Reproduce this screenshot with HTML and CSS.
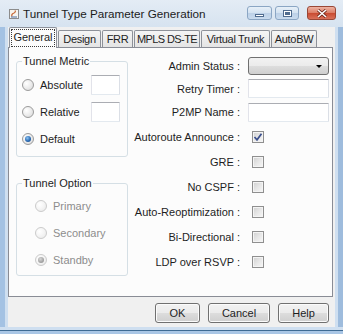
FILE: index.html
```html
<!DOCTYPE html>
<html lang="en">
<head>
    <meta charset="UTF-8">
    <title>Tunnel Type Parameter Generation</title>
    <link rel="stylesheet" href="styles.css">
</head>
<body>
    <div class="window">
        <div class="titlebar">
            <svg class="app-icon" width="10" height="10" viewBox="0 0 10 10">
                <rect x="0.5" y="0.5" width="9" height="9" fill="#f6f4ee" stroke="#8c8c8c"/>
                <path d="M3 7.5 Q2 5 5 4 Q7 3 6 1.5" fill="none" stroke="#c4602c" stroke-width="1.2"/>
                <path d="M2 8 H8" stroke="#4d6fa3" stroke-width="1"/>
            </svg>
            <span class="title">Tunnel Type Parameter Generation</span>
            <div class="caption">
                <span class="cap cap-min"><i></i></span>
                <span class="cap cap-max"><i></i></span>
                <span class="cap cap-close">
                    <svg width="12" height="9" viewBox="0 0 12 9">
                        <path d="M2 1 L10 8 M10 1 L2 8" stroke="#6b2418" stroke-width="3"/>
                        <path d="M2 1 L10 8 M10 1 L2 8" stroke="#fff" stroke-width="1.6"/>
                    </svg>
                </span>
            </div>
        </div>

        <div class="client">
            <div class="tabs">
                <div class="tab active"><span class="focus">General</span></div>
                <div class="tab tab-design">Design</div>
                <div class="tab tab-frr">FRR</div>
                <div class="tab tab-mpls">MPLS DS-TE</div>
                <div class="tab tab-trunk">Virtual Trunk</div>
                <div class="tab tab-autobw">AutoBW</div>
            </div>

            <div class="panel">
                <div class="left-col">
                    <fieldset class="group metric">
                        <legend>Tunnel Metric</legend>
                        <div class="opt"><span class="radio"></span><span class="opt-label">Absolute</span><span class="textbox small"></span></div>
                        <div class="opt"><span class="radio"></span><span class="opt-label">Relative</span><span class="textbox small"></span></div>
                        <div class="opt"><span class="radio on"></span><span class="opt-label">Default</span></div>
                    </fieldset>

                    <fieldset class="group option">
                        <legend>Tunnel Option</legend>
                        <div class="opt sub"><span class="radio off"></span><span class="opt-label dim">Primary</span></div>
                        <div class="opt sub"><span class="radio off"></span><span class="opt-label dim">Secondary</span></div>
                        <div class="opt sub"><span class="radio off on-dim"></span><span class="opt-label dim">Standby</span></div>
                    </fieldset>
                </div>

                <div class="form">
                    <div class="row r-admin"><span class="lbl">Admin Status :</span><div class="combo"><span class="arrow"></span></div></div>
                    <div class="row r-retry"><span class="lbl">Retry Timer :</span><div class="textbox wide"></div></div>
                    <div class="row r-p2mp"><span class="lbl">P2MP Name :</span><div class="textbox wide"></div></div>
                    <div class="row r-check"><span class="lbl">Autoroute Announce :</span>
                        <span class="check">
                            <svg width="10" height="10" viewBox="0 0 10 10"><path d="M1.5 5 L4 7.8 L8.5 1.8" fill="none" stroke="#3b4f8c" stroke-width="1.7"/></svg>
                        </span>
                    </div>
                    <div class="row r-check"><span class="lbl">GRE :</span><span class="check"></span></div>
                    <div class="row r-check"><span class="lbl">No CSPF :</span><span class="check"></span></div>
                    <div class="row r-check"><span class="lbl">Auto-Reoptimization :</span><span class="check"></span></div>
                    <div class="row r-check"><span class="lbl">Bi-Directional :</span><span class="check"></span></div>
                    <div class="row r-check"><span class="lbl">LDP over RSVP :</span><span class="check"></span></div>
                </div>
            </div>

            <div class="buttons">
                <button class="btn btn-ok">OK</button>
                <button class="btn btn-cancel">Cancel</button>
                <button class="btn btn-help">Help</button>
            </div>
        </div>
        <div class="frame-bottom"></div>
    </div>
</body>
</html>
```

FILE: styles.css
```css
* {
    margin: 0;
    padding: 0;
    box-sizing: border-box;
}

body {
    font-family: "Liberation Sans", Arial, sans-serif;
    font-size: 11px;
    color: #1e1e1e;
    background: #bdd3ea;
}

.window {
    width: 343px;
    height: 334px;
    display: flex;
    flex-direction: column;
    background: linear-gradient(to right, #a4c2e3 0, #a4c2e3 5px, #cfdff0 5px, #cfdff0 338px, #9ebcdd 338px);
    overflow: hidden;
}

/* title bar */
.titlebar {
    height: 27px;
    display: flex;
    align-items: center;
    padding: 0 7px 0 9px;
    background: linear-gradient(to bottom, #e4ecf5, #d6e3f0);
    flex-shrink: 0;
}

.app-icon {
    display: block;
    margin-top: 1px;
}

.title {
    margin-left: 4px;
    font-size: 11.7px;
    color: #1b1b1b;
}

.caption {
    margin-left: auto;
    align-self: flex-start;
    margin-top: 6px;
    display: flex;
}

.cap {
    height: 14px;
    border: 1px solid #8ba6c4;
    border-radius: 3px;
    display: flex;
    align-items: center;
    justify-content: center;
    background: linear-gradient(to bottom, #e8f0f8 0, #d3e2f1 50%, #bcd0e7 51%, #c9dbee 100%);
}

.cap-min {
    width: 25px;
}

.cap-min i {
    display: block;
    width: 9px;
    height: 3px;
    margin-top: 4px;
    background: #fff;
    border: 1px solid #4f6b8e;
}

.cap-max {
    width: 24px;
    margin-left: 3px;
}

.cap-max i {
    display: block;
    width: 9px;
    height: 7px;
    background: #fff;
    border: 1px solid #4f6b8e;
    box-shadow: inset 0 0 0 1px #fff, inset 0 0 0 3px #4f6b8e;
}

.cap-close {
    width: 29px;
    margin-left: 8px;
    border-color: #9a4736;
    background: linear-gradient(to bottom, #eeb3a3 0, #db7c64 50%, #c94a30 51%, #d9715a 100%);
}

.cap-close svg {
    display: block;
}

/* client area */
.client {
    flex: 1;
    margin: 0 8px 0 8px;
    background: #f0f0f0;
    display: flex;
    flex-direction: column;
}

.tabs {
    height: 20px;
    display: flex;
    align-items: flex-end;
    padding-left: 1px;
    flex-shrink: 0;
}

.tab {
    height: 17px;
    margin-left: 1px;
    display: flex;
    align-items: center;
    justify-content: center;
    border: 1px solid #8d9199;
    border-bottom: none;
    border-radius: 2px 2px 0 0;
    background: linear-gradient(to bottom, #f5f5f5, #e4e4e4);
    white-space: nowrap;
    letter-spacing: -0.3px;
}

.tab-design {
    width: 43px;
}

.tab-frr {
    width: 31px;
}

.tab-mpls {
    width: 66px;
    letter-spacing: -0.6px;
}

.tab-trunk {
    width: 69px;
}

.tab-autobw {
    width: 46px;
}

.tab.active {
    width: 48px;
    height: 21px;
    margin-left: 0;
    margin-bottom: -1px;
    background: #fcfcfc;
    position: relative;
    z-index: 2;
    letter-spacing: 0;
}

.focus {
    display: block;
    padding: 1px 1px 2px;
    border: 1px dotted #3a3a3a;
    line-height: 13px;
}

.panel {
    height: 250px;
    margin-right: 2px;
    border: 1px solid #898c95;
    background: #fcfcfc;
    display: flex;
    padding: 7px 3px 0 7px;
    flex-shrink: 0;
}

.left-col {
    width: 112px;
    flex-shrink: 0;
}

.group {
    border: 1px solid #d5dfe5;
    border-radius: 3px;
    padding: 3px 4px 4px 5px;
}

.group legend {
    padding: 0 1px;
    line-height: 13px;
}

.option {
    margin-top: 20px;
    padding-top: 2px;
    padding-bottom: 2px;
}

.opt {
    height: 27px;
    display: flex;
    align-items: center;
}

.opt.sub {
    padding-left: 13px;
}

.radio {
    width: 12px;
    height: 12px;
    border-radius: 50%;
    border: 1px solid #9b9b9b;
    background: radial-gradient(circle at 35% 35%, #ffffff 0, #f0f0f0 40%, #d6d6d6 100%);
    flex-shrink: 0;
    display: flex;
    align-items: center;
    justify-content: center;
}

.radio.on::after {
    content: "";
    width: 6px;
    height: 6px;
    border-radius: 50%;
    background: radial-gradient(circle at 40% 35%, #8fc4f2 0, #2b6cb5 55%, #123e78 100%);
}

.radio.off {
    border-color: #cbcbcb;
    background: radial-gradient(circle at 35% 35%, #ffffff 0, #f4f4f4 50%, #e6e6e6 100%);
}

.radio.on-dim::after {
    content: "";
    width: 6px;
    height: 6px;
    border-radius: 50%;
    background: radial-gradient(circle at 40% 35%, #d8d8d8 0, #a3a3a3 60%, #8a8a8a 100%);
}

.opt-label {
    margin-left: 6px;
    width: 51px;
}

.opt-label.dim {
    color: #8d8d8d;
    width: auto;
}

.textbox {
    background: #fff;
    border: 1px solid;
    border-color: #abadb3 #dbdfe6 #e3e9ef #e2e3ea;
    border-radius: 1px;
}

.textbox.small {
    width: 29px;
    height: 20px;
}

.textbox.wide {
    width: 81px;
    height: 19px;
}

.form {
    flex: 1;
}

.row {
    display: grid;
    grid-template-columns: 1fr 81px;
    column-gap: 8px;
    align-items: center;
}

.row .lbl {
    text-align: right;
    white-space: nowrap;
}

.r-admin {
    height: 22px;
}

.r-retry {
    height: 23px;
}

.r-p2mp {
    height: 24px;
}

.r-check {
    height: 25px;
}

.combo {
    width: 81px;
    height: 18px;
    border: 1px solid #707070;
    border-radius: 3px;
    background: linear-gradient(to bottom, #f2f2f2 0, #ebebeb 50%, #dddddd 51%, #cfcfcf 100%);
    display: flex;
    align-items: center;
    justify-content: flex-end;
    padding-right: 6px;
}

.arrow {
    width: 0;
    height: 0;
    border-left: 3px solid transparent;
    border-right: 3px solid transparent;
    border-top: 3px solid #000;
}

.check {
    width: 12px;
    height: 12px;
    margin-left: 4px;
    border: 1px solid #8f8f8f;
    background: linear-gradient(135deg, #cfcfcf 0, #e6e6e6 50%, #f7f7f7 100%);
    box-shadow: inset 0 0 0 1px #f4f4f4;
    display: flex;
    align-items: center;
    justify-content: center;
}

.check svg {
    display: block;
}

.buttons {
    height: 30px;
    display: flex;
    justify-content: flex-end;
    align-items: flex-start;
    padding-top: 6px;
    padding-right: 6px;
    gap: 8px;
    flex-shrink: 0;
}

.btn {
    height: 20px;
    font-family: inherit;
    font-size: 11px;
    color: #1e1e1e;
    border: 1px solid #707070;
    border-radius: 3px;
    background: linear-gradient(to bottom, #f2f2f2 0, #ebebeb 50%, #dddddd 51%, #cfcfcf 100%);
    box-shadow: inset 0 0 0 1px #fbfbfb;
}

.btn-ok {
    width: 45px;
}

.btn-cancel {
    width: 62px;
}

.btn-help {
    width: 51px;
}

.frame-bottom {
    height: 7px;
    flex-shrink: 0;
    background: linear-gradient(to bottom, #cfdff0 0, #cfdff0 3px, #3f6b94 3px, #3f6b94 4px, #a9c6e5 4px);
}
```
